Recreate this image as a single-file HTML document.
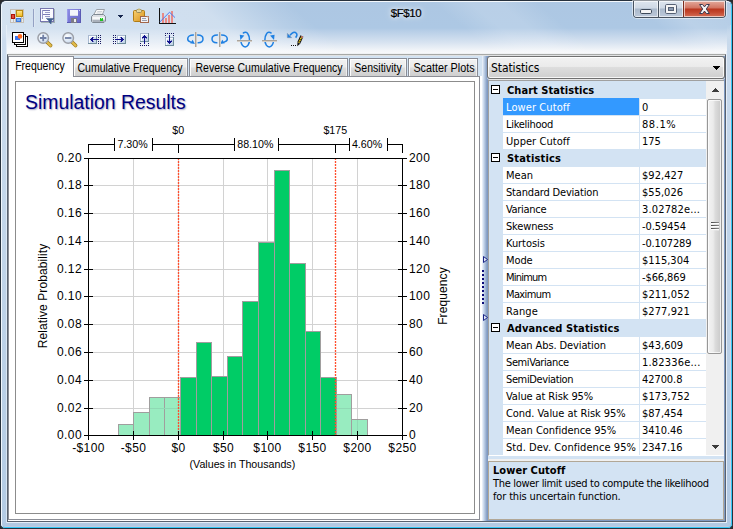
<!DOCTYPE html>
<html lang="en"><head><meta charset="utf-8"><title>$F$10</title>
<style>
html,body{margin:0;padding:0}
body{width:733px;height:529px;overflow:hidden;background:#2b2b2e;position:relative;font-family:"Liberation Sans",sans-serif;font-size:11px;color:#000}
div,span,i,b,u{box-sizing:border-box}
#win{position:absolute;left:0;top:0;width:733px;height:529px;border-radius:6px 6px 5px 5px;background:#b7cfe8;border:1px solid #27313d;overflow:hidden}
#win .hl{position:absolute;left:0;top:0;width:731px;height:527px;border-radius:5px 5px 4px 4px;border:1px solid;border-color:#f4f8fc #35c9f7 #35c9f7 #f0f6fc}
#glass{position:absolute;left:1px;top:1px;width:729px;height:54px;background:linear-gradient(40deg,rgba(255,255,255,.48) 0,rgba(255,255,255,.42) 165px,rgba(255,255,255,.12) 205px,rgba(255,255,255,0) 225px,rgba(255,255,255,0) 318px,rgba(255,255,255,.15) 342px,rgba(255,255,255,.15) 360px,rgba(255,255,255,0) 385px,rgba(255,255,255,0) 445px,rgba(255,255,255,.17) 468px,rgba(255,255,255,.08) 510px),linear-gradient(to bottom,#adc7e3 0,#adc8e4 26px,#b7cee7 29px,#d6e2f0 40px,#f4f6f9 49px,#f8f9f9 54px)}
#sideL{position:absolute;left:1px;top:24px;width:5px;height:502px;background:linear-gradient(to right,rgba(255,255,255,0) 0,rgba(255,255,255,0) 4px,rgba(240,246,253,.6) 4px),linear-gradient(to bottom,rgba(204,220,238,0) 0,#ccdcee 14px,#c6d8eb 25%,#b3cbe4 100%)}
#sideR{position:absolute;left:726px;top:24px;width:4px;height:502px;background:linear-gradient(to right,rgba(255,255,255,0) 0,rgba(255,255,255,0) 3px,rgba(225,215,230,.5) 3px),linear-gradient(to bottom,rgba(201,218,236,0) 0,#c9daec 14px,#c3d6ea 25%,#b0c8e2 100%)}
#sideB{position:absolute;left:1px;top:522px;width:729px;height:4px;background:linear-gradient(to bottom,#b2cae3 0,#b2cae3 3px,#c3cbe0 3px)}
#inner{position:absolute;left:7px;top:54px;width:719px;height:468px;border:1px solid #58626f;border-top-color:#a7a9a7;background:#fff}
#inner:before{content:"";position:absolute;left:0;top:0;width:717px;height:1px;background:#e1e2e3}
#innerhl{position:absolute;left:8px;top:52px;width:717px;height:2px;background:linear-gradient(to bottom,rgba(255,255,255,.5),rgba(235,237,240,.9))}
#brhl{position:absolute;left:7px;top:522px;width:720px;height:1px;background:#e4edf8}
#brhl2{position:absolute;left:726px;top:51px;width:1px;height:472px;background:#e6eef9}
#title{position:absolute;left:386px;top:5px;width:40px;height:16px;line-height:16px;text-align:center;font-size:11.5px;letter-spacing:-.45px;color:#000;-webkit-text-stroke:.2px #000;text-shadow:0 0 4px rgba(255,255,255,.9),0 0 9px rgba(255,255,255,.7)}
/* caption buttons */
#cap{position:absolute;left:633px;top:1px;width:93px;height:17px;border:1px solid #47525f;border-top:none;border-radius:0 0 4px 4px;overflow:hidden;box-shadow:0 0 0 1px rgba(255,255,255,.5)}
#cap div{position:absolute;top:0;height:16px;box-shadow:inset 0 0 0 1px rgba(255,255,255,.62)}
#cmin{left:0;width:24px;background:linear-gradient(to bottom,#dde5ee 0,#cfd9e5 7px,#aab9cb 8px,#bdc9da 16px)}
#cmax{left:25px;width:24px;background:linear-gradient(to bottom,#dde5ee 0,#cfd9e5 7px,#aab9cb 8px,#bdc9da 16px)}
#ccls{left:50px;width:41px;background:linear-gradient(to bottom,#e3ab9d 0,#d27461 7px,#b9371f 8px,#c2452c 11px,#d46e56 16px)}
#cap s{position:absolute;top:0;width:1px;height:16px;background:#47525f}
#cap svg{position:absolute;left:0;top:0}
/* toolbar */
.ic{position:absolute;width:16px;height:16px;overflow:visible}
/* tabs */
#tabs{position:absolute;left:0;top:0;font-size:11px}
#clientbg{position:absolute;left:8px;top:56px;width:474px;height:21px;background:#d3e3f3}
.tab{position:absolute;top:58px;height:19px;border:1px solid #898c95;background:linear-gradient(to bottom,#f2f2f2 0,#ebebeb 48%,#dddddd 52%,#cfcfcf 100%);box-shadow:inset 1px 1px 0 rgba(255,255,255,.9),inset -1px 0 0 rgba(255,255,255,.6);color:#000}
.tab span{position:absolute;left:50%;top:0;line-height:18px;font-size:12px;white-space:nowrap;transform:translateX(-50%) scaleX(.875)}
.tab.sel{top:56px;height:21px;background:#fff;z-index:3;border-bottom:none;box-shadow:none}
.tab.sel span{margin-left:-1px}
.tab.t2 span{margin-left:-1px}
.tab.t5 span{margin-left:1px;transform:translateX(-50%) scaleX(.9)}
#tabpage{position:absolute;left:8px;top:76px;width:472px;height:444px;border:1px solid #8c8e96;background:#fff}
#chartbox{position:absolute;left:6px;top:4px;width:460px;height:433px;border:1px solid #8c8c8c;background:#fff}
#chart{position:absolute;left:-1px;top:-1px}
#labels{position:absolute;left:-16px;top:-82px;width:0;height:0}
.ctitle{position:absolute;left:25px;top:91px;font-size:19.4px;line-height:22px;color:#000080;white-space:nowrap;text-shadow:1px 1px 1.5px rgba(0,0,80,.35)}
.yl,.yr,.xl{position:absolute;font-size:12px;line-height:14px;white-space:nowrap;letter-spacing:.4px}
.yl{left:37px;width:45px;text-align:right}
.yr{left:409px;width:45px;text-align:left}
.xl{top:441px;width:80px;text-align:center}
.bl{position:absolute;font-size:10.67px;line-height:13px;text-align:center;white-space:nowrap}
.rot{position:absolute;letter-spacing:.1px;font-size:12px;line-height:14px;height:14px;text-align:center;white-space:nowrap;transform:rotate(-90deg);transform-origin:50% 50%}
/* splitter */
#split{position:absolute;left:480px;top:56px;width:7px;height:465px;background:linear-gradient(to right,#fff 0,#fff 2px,#e6eef8 2.5px,#c3d3e8 4px,#a3b8d6 5.5px,#839cc3 7px)}
#splittop{position:absolute;left:480px;top:56px;width:2px;height:20px;background:#d3e3f3}
/* right panel */
#rbg{position:absolute;left:487px;top:56px;width:238px;height:465px;background:#7f9ac2}
#combo{position:absolute;left:487px;top:56px;width:238px;height:23px;border:1px solid #707070;border-radius:3px;background:linear-gradient(to bottom,#f2f2f2 0,#ebebeb 45%,#dddddd 50%,#cfcfcf 100%);box-shadow:inset 0 0 0 1px rgba(255,255,255,.8),0 1px 0 #e9e9e9;font-family:"DejaVu Sans Condensed","DejaVu Sans","Liberation Sans",sans-serif;font-size:12px;line-height:19px}
#combo span{position:absolute;left:3px;top:2px;letter-spacing:-.1px}
#combo i{position:absolute;left:225px;top:9px;width:7px;height:4px;background:linear-gradient(#000,#000) 0 0/7px 1px no-repeat,linear-gradient(#000,#000) 1px 1px/5px 1px no-repeat,linear-gradient(#000,#000) 2px 2px/3px 1px no-repeat,linear-gradient(#000,#000) 3px 3px/1px 1px no-repeat}
#grid{position:absolute;left:488px;top:80px;width:236px;height:376px;border-left:1px solid #a0a0a0;border-top:1px solid #a0a0a0;border-bottom:1px solid #fff;background:#d3e3f3;font-family:"DejaVu Sans Condensed","DejaVu Sans","Liberation Sans",sans-serif;font-size:11px;overflow:hidden}
.cat{position:absolute;left:-1px;width:218px;height:17px;line-height:16px;padding-top:1px}
.cat span{position:absolute;left:19px;top:1px;font-weight:bold;white-space:nowrap}
.pm{position:absolute;left:3px;top:3px;width:9px;height:9px;border:1px solid #000;background:#fff}
.pm:after{content:"";position:absolute;left:1px;top:3px;width:5px;height:1px;background:#000}
.row{position:absolute;left:14px;width:203px;height:16px;line-height:16px;background:#fff;white-space:nowrap}
.row .k{position:absolute;left:0;top:0;width:136px;height:16px;padding-left:3px;padding-top:1px;overflow:hidden}
.row .v{position:absolute;left:137px;top:0;width:66px;height:16px;padding-left:2px;padding-top:1px;overflow:hidden;background:#fff}
.row:before{content:"";position:absolute;left:136px;top:0;width:1px;height:16px;background:#d3e3f3}
.row.sel .k{background:#3399ff;color:#fff;top:-1px;height:17px;padding-top:2px}
#sb{position:absolute;left:217px;top:-1px;width:18px;height:375px;background:#f0f0f0}
#sb .up{position:absolute;left:6px;top:8px;width:7px;height:5px;background:linear-gradient(#3c3c3c,#3c3c3c) 3px 0/1px 1px no-repeat,linear-gradient(#3c3c3c,#3c3c3c) 2px 1px/3px 1px no-repeat,linear-gradient(#3c3c3c,#3c3c3c) 1px 2px/5px 1px no-repeat,linear-gradient(#3c3c3c,#3c3c3c) 0 3px/7px 1px no-repeat}
#sb .dn{position:absolute;left:6px;top:365px;width:7px;height:4px;background:linear-gradient(#3c3c3c,#3c3c3c) 0 0/7px 1px no-repeat,linear-gradient(#3c3c3c,#3c3c3c) 1px 1px/5px 1px no-repeat,linear-gradient(#3c3c3c,#3c3c3c) 2px 2px/3px 1px no-repeat,linear-gradient(#3c3c3c,#3c3c3c) 3px 3px/1px 1px no-repeat}
#sb .thumb{position:absolute;left:1px;top:19px;width:15px;height:255px;border:1px solid #979797;border-radius:2px;background:linear-gradient(to right,#f3f3f3 0,#ebebeb 40%,#dcdcdc 55%,#c9c9c9 100%);box-shadow:inset 0 0 0 1px rgba(255,255,255,.7)}
#sb .thumb u{position:absolute;left:3px;top:122px;width:8px;height:9px;background:linear-gradient(to right,rgba(255,255,255,0),rgba(255,255,255,.35)),linear-gradient(to bottom,#4a4a4a 0,#4a4a4a 1px,#fbfbfb 1px,#fbfbfb 2px,transparent 2px,transparent 3px,#4a4a4a 3px,#4a4a4a 4px,#fbfbfb 4px,#fbfbfb 5px,transparent 5px,transparent 6px,#4a4a4a 6px,#4a4a4a 7px,#fbfbfb 7px,#fbfbfb 8px,transparent 8px)}
#desc{position:absolute;left:488px;top:461px;width:236px;height:59px;background:#d3e3f3;border:1px solid #b1a796;font-family:"DejaVu Sans Condensed","DejaVu Sans","Liberation Sans",sans-serif;font-size:11px;line-height:13px;padding:2px 0 0 4px;white-space:nowrap}
#descgap{position:absolute;left:488px;top:456px;width:236px;height:5px;background:linear-gradient(to bottom,#d3e3f3 0,#d3e3f3 3px,#f1f1f1 3px)}

</style></head>
<body>
<div id="win">
<div id="glass"></div><div id="sideL"></div><div id="sideR"></div><div id="sideB"></div>
<div class="hl"></div>
</div>
<div id="innerhl"></div>
<div id="inner"></div><div id="brhl"></div><div id="brhl2"></div>
<div id="clientbg"></div>
<div id="rbg"></div><div id="descgap"></div>
<div id="title">$F$10</div>
<div id="cap">
<div id="cmin"><svg width="24" height="16"><rect x="6.5" y="8.5" width="11" height="4" rx="1.2" fill="#f5f5f5" stroke="#3d4959"/></svg></div><s style="left:24px"></s>
<div id="cmax"><svg width="24" height="16"><rect x="6.5" y="3.5" width="11" height="9" rx="1.2" fill="#f6f6f6" stroke="#566174"/><rect x="9.5" y="6.5" width="5" height="3" fill="#8b9bb1" stroke="#566174"/></svg></div><s style="left:49px;background:#7a2d1e"></s>
<div id="ccls"><svg width="41" height="16"><path d="M15.6 3.5 L18.6 3.5 L20.5 5.9 L22.4 3.5 L25.4 3.5 L22.3 8 L25.4 12.5 L22.4 12.5 L20.5 10.1 L18.6 12.5 L15.6 12.5 L18.7 8 Z" fill="#f6f6f6" stroke="#3c3c52" stroke-width="1" stroke-linejoin="round"/></svg></div>
</div>
<svg id="tb" width="320" height="54" viewBox="0 0 320 54" style="position:absolute;left:0;top:0">
<defs>
<linearGradient id="gY" x1="0" y1="0" x2="0" y2="1"><stop offset="0" stop-color="#ffe98f"/><stop offset="1" stop-color="#f2b51a"/></linearGradient>
<linearGradient id="gF" x1="0" y1="0" x2="1" y2="1"><stop offset="0" stop-color="#8f8fe6"/><stop offset="1" stop-color="#6464c4"/></linearGradient>
<linearGradient id="gC" x1="0" y1="0" x2="1" y2="1"><stop offset="0" stop-color="#f8d070"/><stop offset="1" stop-color="#d8921c"/></linearGradient>
<radialGradient id="gL" cx=".4" cy=".35" r=".7"><stop offset="0" stop-color="#ffffff"/><stop offset="1" stop-color="#c6d8ee"/></radialGradient>
<linearGradient id="gB" x1="0" y1="0" x2="1" y2="1"><stop offset="0" stop-color="#eef4fb"/><stop offset="1" stop-color="#b9cde4"/></linearGradient>
</defs>
<!-- icon 1 : layout -->
<g shape-rendering="crispEdges">
<rect x="10.5" y="9.5" width="13" height="13" fill="#eef3f8" fill-opacity=".55" stroke="#c7c0b6"/>
<rect x="15" y="10" width="1" height="12" fill="#c7c0b6"/><rect x="11" y="18" width="12" height="1" fill="#c7c0b6"/><rect x="13" y="19" width="1" height="3" fill="#c7c0b6"/><rect x="21" y="17" width="1" height="5" fill="#c7c0b6"/>
<rect x="16.5" y="10.5" width="6" height="6" fill="url(#gY)" stroke="#b98a10"/>
<rect x="11.5" y="14.5" width="3" height="4" fill="#e0493a" stroke="#b01208"/>
<rect x="16.5" y="18.5" width="4" height="3" fill="#79adf2" stroke="#3b78dc"/>
<!-- separator -->
<rect x="33" y="9" width="1" height="18" fill="#94a1c3"/><rect x="34" y="9" width="1" height="18" fill="#dde7f3"/>
</g>
<!-- icon 2 : report/filter -->
<g shape-rendering="crispEdges">
<rect x="41" y="9" width="14" height="14" fill="#7f8f88" opacity=".55"/>
<rect x="40.5" y="8.5" width="13" height="13" fill="#fbfbff" stroke="#7676ae"/>
<rect x="42" y="10" width="8" height="1" fill="#7d7db6"/><rect x="45" y="12" width="5" height="1" fill="#9c9cca"/><rect x="42" y="14" width="8" height="1" fill="#7d7db6"/><rect x="45" y="16" width="5" height="1" fill="#9c9cca"/><rect x="42" y="10" width="1" height="9" fill="#9a9ac8"/>
</g>
<path d="M46.3 18.4 L53.7 18.4 L51.1 21.2 L51.1 23.9 L49.4 22.5 L49.4 21.2 Z" fill="#3f6192" stroke="#34507e" stroke-width=".5"/>
<!-- floppy -->
<g shape-rendering="crispEdges">
<rect x="67" y="9" width="14" height="14" fill="url(#gF)"/>
<rect x="67" y="9" width="1" height="14" fill="#9a9aea"/><rect x="80" y="9" width="1" height="14" fill="#5a5ab4"/><rect x="67" y="22" width="14" height="1" fill="#5a5ab4"/>
<rect x="70" y="10" width="8" height="6" fill="#f4f6fb"/><rect x="70" y="15" width="8" height="1" fill="#d8dcea"/>
<rect x="71" y="18" width="6" height="5" fill="#7c7c86"/><rect x="74" y="19" width="2" height="3" fill="#f0f0f0"/>
<rect x="79" y="10" width="1" height="1" fill="#d0d0f8"/>
</g>
<!-- printer -->
<g>
<path d="M96.5 9.5 L104.5 9.5 L102.2 15 L93.6 15 Z" fill="#fbfbfb" stroke="#9aa0a8" stroke-width="1"/>
<path d="M97.3 11.5 L102.3 11.5 M96.6 13 L101.6 13" stroke="#c4c8cf" stroke-width=".8"/>
<path d="M93.5 14.5 L103.5 14.5 L105.5 16.5 L105.5 21 L104 22.5 L92.5 22.5 L91.5 21.5 L91.5 16.5 Z" fill="#dcdfe4" stroke="#7f8892" stroke-width="1"/>
<rect x="92.5" y="17" width="12" height="2" fill="#f6f7f9"/>
<rect x="92.5" y="20" width="12" height="2" fill="#aab1bb"/>
<rect x="100" y="18" width="3" height="3" fill="#1fc423" shape-rendering="crispEdges"/><rect x="101" y="18" width="1" height="1" fill="#9cf49c" shape-rendering="crispEdges"/>
</g>
<!-- dropdown arrow -->
<g shape-rendering="crispEdges" fill="#14244c"><rect x="118" y="15" width="5" height="1"/><rect x="119" y="16" width="3" height="1"/><rect x="120" y="17" width="1" height="1"/></g>
<!-- clipboard -->
<g>
<rect x="133.5" y="10.5" width="11" height="11" rx="1" fill="url(#gC)" stroke="#b07c14"/>
<rect x="136.5" y="9.5" width="5" height="3" rx="1" fill="#e8d9a0" stroke="#9a8a58"/>
<rect x="138" y="8.6" width="2" height="1.6" fill="#c9b870"/>
<rect x="140.5" y="16.5" width="8" height="6" fill="#f3f3f6" stroke="#a2664a"/>
<path d="M142 18.5 H146 M142 20.5 H147" stroke="#9aa0b0" stroke-width="1"/>
<path d="M146.5 16.5 L148.5 18.5 L148.5 16.5 Z" fill="#d9c0b0"/>
</g>
<!-- chart icon -->
<g shape-rendering="crispEdges">
<rect x="162" y="13" width="2" height="10" fill="#e98a86"/><rect x="165" y="18" width="2" height="5" fill="#e98a86"/><rect x="168" y="15" width="2" height="8" fill="#e98a86"/><rect x="171" y="11" width="2" height="12" fill="#e98a86"/>
<rect x="159" y="8" width="1" height="16" fill="#111"/><rect x="159" y="23" width="17" height="1" fill="#111"/>
</g>
<path d="M159.8 22 L169.5 12.2 L175 17.6" fill="none" stroke="#4674f4" stroke-width=".95"/>
<!-- row 2 : pages -->
<g shape-rendering="crispEdges">
<rect x="16.5" y="36.5" width="11" height="10" fill="#fff" stroke="#000"/>
<rect x="14.5" y="34.5" width="11" height="10" fill="#fff" stroke="#000"/>
<rect x="12.5" y="32.5" width="11" height="10" fill="#fff" stroke="#000"/>
<rect x="15" y="36" width="5" height="4" fill="#3a74f0"/>
</g>
<circle cx="20" cy="36.4" r="2.3" fill="#ff6a1f"/>
<!-- zoom in -->
<g>
<path d="M47 42 L50.6 45.6" stroke="#9c7a1c" stroke-width="3.6" stroke-linecap="round"/>
<path d="M47 42 L50.6 45.6" stroke="#e2bb4a" stroke-width="2.2" stroke-linecap="round"/>
<circle cx="43.2" cy="38" r="5.3" fill="url(#gL)" stroke="#9b9ea6" stroke-width="1.4"/>
<path d="M40 38 H46.4 M43.2 34.8 V41.2" stroke="#6f7ea4" stroke-width="1.8"/>
</g>
<!-- zoom out -->
<g>
<path d="M72 42 L75.6 45.6" stroke="#9c7a1c" stroke-width="3.6" stroke-linecap="round"/>
<path d="M72 42 L75.6 45.6" stroke="#e2bb4a" stroke-width="2.2" stroke-linecap="round"/>
<circle cx="68.2" cy="38" r="5.3" fill="url(#gL)" stroke="#9b9ea6" stroke-width="1.4"/>
<path d="M65 38 H71.4" stroke="#6f7ea4" stroke-width="1.8"/>
</g>
<!-- arrows -->
<g shape-rendering="crispEdges">
<rect x="88" y="35" width="9" height="9" fill="url(#gB)"/><rect x="88" y="35" width="9" height="1" fill="#a9b9d1"/><rect x="88" y="35" width="1" height="9" fill="#a9b9d1"/><rect x="88" y="43" width="9" height="1" fill="#6f8d9b"/><rect x="96" y="35" width="1" height="9" fill="#6f8d9b"/><rect x="89" y="36" width="7" height="1" fill="#fff" opacity=".8"/><rect x="89" y="36" width="1" height="7" fill="#fff" opacity=".8"/>
<rect x="98" y="35" width="1" height="1" fill="#15155e"/><rect x="98" y="37" width="1" height="1" fill="#15155e"/><rect x="98" y="39" width="1" height="1" fill="#15155e"/><rect x="98" y="41" width="1" height="1" fill="#15155e"/><rect x="98" y="43" width="1" height="1" fill="#15155e"/><rect x="100" y="35" width="1" height="1" fill="#15155e"/><rect x="100" y="37" width="1" height="1" fill="#15155e"/><rect x="100" y="39" width="1" height="1" fill="#15155e"/><rect x="100" y="41" width="1" height="1" fill="#15155e"/><rect x="100" y="43" width="1" height="1" fill="#15155e"/>
<rect x="91" y="39" width="8" height="1" fill="#11118c"/>
<rect x="90" y="39" width="1" height="1" fill="#11118c"/><rect x="91" y="38" width="1" height="3" fill="#11118c"/><rect x="92" y="37" width="1" height="5" fill="#11118c"/><rect x="93" y="37" width="1" height="1" fill="#11118c" opacity=".5"/><rect x="93" y="41" width="1" height="1" fill="#11118c" opacity=".5"/>
<rect x="117" y="35" width="9" height="9" fill="url(#gB)"/><rect x="117" y="35" width="9" height="1" fill="#a9b9d1"/><rect x="117" y="35" width="1" height="9" fill="#a9b9d1"/><rect x="117" y="43" width="9" height="1" fill="#6f8d9b"/><rect x="125" y="35" width="1" height="9" fill="#6f8d9b"/><rect x="118" y="36" width="7" height="1" fill="#fff" opacity=".8"/><rect x="118" y="36" width="1" height="7" fill="#fff" opacity=".8"/>
<rect x="113" y="35" width="1" height="1" fill="#15155e"/><rect x="113" y="37" width="1" height="1" fill="#15155e"/><rect x="113" y="39" width="1" height="1" fill="#15155e"/><rect x="113" y="41" width="1" height="1" fill="#15155e"/><rect x="113" y="43" width="1" height="1" fill="#15155e"/><rect x="115" y="35" width="1" height="1" fill="#15155e"/><rect x="115" y="37" width="1" height="1" fill="#15155e"/><rect x="115" y="39" width="1" height="1" fill="#15155e"/><rect x="115" y="41" width="1" height="1" fill="#15155e"/><rect x="115" y="43" width="1" height="1" fill="#15155e"/>
<rect x="115" y="39" width="8" height="1" fill="#11118c"/>
<rect x="123" y="39" width="1" height="1" fill="#11118c"/><rect x="122" y="38" width="1" height="3" fill="#11118c"/><rect x="121" y="37" width="1" height="5" fill="#11118c"/><rect x="120" y="37" width="1" height="1" fill="#11118c" opacity=".5"/><rect x="120" y="41" width="1" height="1" fill="#11118c" opacity=".5"/>
<rect x="140" y="33" width="9" height="9" fill="url(#gB)"/><rect x="140" y="33" width="9" height="1" fill="#a9b9d1"/><rect x="140" y="33" width="1" height="9" fill="#a9b9d1"/><rect x="140" y="41" width="9" height="1" fill="#6f8d9b"/><rect x="148" y="33" width="1" height="9" fill="#6f8d9b"/><rect x="141" y="34" width="7" height="1" fill="#fff" opacity=".8"/><rect x="141" y="34" width="1" height="7" fill="#fff" opacity=".8"/>
<rect x="140" y="43" width="1" height="1" fill="#15155e"/><rect x="148" y="43" width="1" height="1" fill="#15155e"/><rect x="140" y="45" width="1" height="1" fill="#15155e"/><rect x="142" y="45" width="1" height="1" fill="#15155e"/><rect x="144" y="45" width="1" height="1" fill="#15155e"/><rect x="146" y="45" width="1" height="1" fill="#15155e"/><rect x="148" y="45" width="1" height="1" fill="#15155e"/>
<rect x="144" y="36" width="1" height="8" fill="#11118c"/>
<rect x="144" y="35" width="1" height="1" fill="#11118c"/><rect x="143" y="36" width="3" height="1" fill="#11118c"/><rect x="142" y="37" width="5" height="1" fill="#11118c"/><rect x="142" y="38" width="1" height="1" fill="#11118c" opacity=".5"/><rect x="146" y="38" width="1" height="1" fill="#11118c" opacity=".5"/>
<rect x="165" y="37" width="9" height="9" fill="url(#gB)"/><rect x="165" y="37" width="9" height="1" fill="#a9b9d1"/><rect x="165" y="37" width="1" height="9" fill="#a9b9d1"/><rect x="165" y="45" width="9" height="1" fill="#6f8d9b"/><rect x="173" y="37" width="1" height="9" fill="#6f8d9b"/><rect x="166" y="38" width="7" height="1" fill="#fff" opacity=".8"/><rect x="166" y="38" width="1" height="7" fill="#fff" opacity=".8"/>
<rect x="165" y="33" width="1" height="1" fill="#15155e"/><rect x="167" y="33" width="1" height="1" fill="#15155e"/><rect x="169" y="33" width="1" height="1" fill="#15155e"/><rect x="171" y="33" width="1" height="1" fill="#15155e"/><rect x="173" y="33" width="1" height="1" fill="#15155e"/><rect x="165" y="35" width="1" height="1" fill="#15155e"/><rect x="173" y="35" width="1" height="1" fill="#15155e"/>
<rect x="169" y="35" width="1" height="8" fill="#11118c"/>
<rect x="169" y="43" width="1" height="1" fill="#11118c"/><rect x="168" y="42" width="3" height="1" fill="#11118c"/><rect x="167" y="41" width="5" height="1" fill="#11118c"/><rect x="167" y="40" width="1" height="1" fill="#11118c" opacity=".5"/><rect x="171" y="40" width="1" height="1" fill="#11118c" opacity=".5"/>
</g>
<!-- rotate icons -->
<g fill="none" stroke="#1f80e2" stroke-width="1.5" stroke-linecap="round">
<path d="M197.6 35 C201 35 203 36.8 203 38.9 C203 41 201 42.5 198.2 42.8"/>
<path d="M193.4 35 C190 35 187.7 36.8 187.7 38.9 C187.7 40.3 188.6 41.3 190.4 41.9"/>
<path d="M194.9 43.9 L190.1 43.3 L192.7 39.7 Z" fill="#1f80e2" stroke="none"/>
</g>
<g fill="none" stroke="#1f80e2" stroke-width="1.5" stroke-linecap="round" transform="translate(415,0) scale(-1,1)">
<path d="M197.6 35 C201 35 203 36.8 203 38.9 C203 41 201 42.5 198.2 42.8"/>
<path d="M193.4 35 C190 35 187.7 36.8 187.7 38.9 C187.7 40.3 188.6 41.3 190.4 41.9"/>
<path d="M194.9 43.9 L190.1 43.3 L192.7 39.7 Z" fill="#1f80e2" stroke="none"/>
</g>
<g shape-rendering="crispEdges">
<rect x="195" y="32" width="1" height="15" fill="#aaa39b"/><rect x="196" y="32" width="1" height="15" fill="#d3cdc6"/>
<rect x="219" y="32" width="1" height="15" fill="#aaa39b"/><rect x="220" y="32" width="1" height="15" fill="#d3cdc6"/>
</g>
<g fill="none" stroke="#1f80e2" stroke-width="1.5" stroke-linecap="round">
<path d="M243.4 32.9 C244.8 31.7 246.6 31.9 247.8 33.7 C249.9 36.7 250.1 42.2 248.1 45.2 C246.6 47.5 243.7 47.5 242.3 45.2 C241.7 44.2 241.3 43.3 241.1 42.4"/>
<path d="M239.8 34.7 L244.3 35.5 L240.4 40.1 Z" fill="#1f80e2" stroke="none"/>
</g>
<g fill="none" stroke="#1f80e2" stroke-width="1.5" stroke-linecap="round" transform="translate(514.4,0) scale(-1,1)">
<path d="M243.4 32.9 C244.8 31.7 246.6 31.9 247.8 33.7 C249.9 36.7 250.1 42.2 248.1 45.2 C246.6 47.5 243.7 47.5 242.3 45.2 C241.7 44.2 241.3 43.3 241.1 42.4"/>
<path d="M239.8 34.7 L244.3 35.5 L240.4 40.1 Z" fill="#1f80e2" stroke="none"/>
</g>
<g shape-rendering="crispEdges">
<rect x="237" y="40" width="15" height="1" fill="#aaa39b"/><rect x="237" y="41" width="15" height="1" fill="#d3cdc6"/>
<rect x="262" y="40" width="15" height="1" fill="#aaa39b"/><rect x="262" y="41" width="15" height="1" fill="#d3cdc6"/>
</g>
<!-- undo + pencil -->
<g>
<path d="M290 35.4 C292 32.4 294.6 31.5 296.1 33 C297.5 34.3 297 36.1 295.6 37.6" fill="none" stroke="#1f80e2" stroke-width="1.6"/>
<path d="M287.3 33.2 L287.3 37.7 L291.8 37.7 Z" fill="#1f80e2" stroke="#8a98ac" stroke-width=".5"/>
<path d="M298.7 43 L301.9 36" stroke="#111" stroke-width="3.2" stroke-linecap="butt"/>
<path d="M297.2 46.3 L297.5 42.4 L300.2 43.7 Z" fill="#111"/>
<path d="M298.8 42.8 L301.6 36.8" stroke="#f6d21c" stroke-width="1.4" stroke-dasharray="1.4 .6"/>
<path d="M301.3 36.6 L302.9 37.3" stroke="#ef8d8d" stroke-width="1.3"/>
<g shape-rendering="crispEdges" fill="#111"><rect x="291" y="45" width="1" height="1"/><rect x="293" y="45" width="1" height="1"/><rect x="295" y="45" width="1" height="1"/></g>
</g>
</svg>
<div id="tabs">
<div class="tab sel" style="left:8px;width:66px"><span>Frequency</span></div>
<div class="tab t2" style="left:73px;width:115px"><span>Cumulative Frequency</span></div>
<div class="tab t3" style="left:189px;width:159px"><span>Reverse Cumulative Frequency</span></div>
<div class="tab t4" style="left:349px;width:58px"><span>Sensitivity</span></div>
<div class="tab t5" style="left:408px;width:70px"><span>Scatter Plots</span></div>
</div>
<div id="tabpage"><div id="chartbox">
<svg id="chart" width="460" height="433" viewBox="15 81 460 433" shape-rendering="crispEdges">
<rect x="133" y="159" width="1" height="276" fill="#d2d2d2"/>
<rect x="178" y="159" width="1" height="276" fill="#d2d2d2"/>
<rect x="223" y="159" width="1" height="276" fill="#d2d2d2"/>
<rect x="267" y="159" width="1" height="276" fill="#d2d2d2"/>
<rect x="312" y="159" width="1" height="276" fill="#d2d2d2"/>
<rect x="357" y="159" width="1" height="276" fill="#d2d2d2"/>
<rect x="89" y="408" width="313" height="1" fill="#d2d2d2"/>
<rect x="89" y="380" width="313" height="1" fill="#d2d2d2"/>
<rect x="89" y="352" width="313" height="1" fill="#d2d2d2"/>
<rect x="89" y="324" width="313" height="1" fill="#d2d2d2"/>
<rect x="89" y="296" width="313" height="1" fill="#d2d2d2"/>
<rect x="89" y="269" width="313" height="1" fill="#d2d2d2"/>
<rect x="89" y="241" width="313" height="1" fill="#d2d2d2"/>
<rect x="89" y="213" width="313" height="1" fill="#d2d2d2"/>
<rect x="89" y="185" width="313" height="1" fill="#d2d2d2"/>
<rect x="118" y="424" width="16" height="11" fill="#a09e9e"/><rect x="119" y="425" width="14" height="10" fill="#98ecc0"/>
<rect x="133" y="412" width="17" height="23" fill="#a09e9e"/><rect x="134" y="413" width="15" height="22" fill="#98ecc0"/>
<rect x="149" y="397" width="16" height="38" fill="#a09e9e"/><rect x="150" y="398" width="14" height="37" fill="#98ecc0"/>
<rect x="164" y="397" width="17" height="38" fill="#a09e9e"/><rect x="165" y="398" width="15" height="37" fill="#98ecc0"/>
<rect x="180" y="377" width="17" height="58" fill="#a09e9e"/><rect x="181" y="378" width="15" height="57" fill="#00cc66"/>
<rect x="196" y="342" width="16" height="93" fill="#a09e9e"/><rect x="197" y="343" width="14" height="92" fill="#00cc66"/>
<rect x="211" y="376" width="17" height="59" fill="#a09e9e"/><rect x="212" y="377" width="15" height="58" fill="#00cc66"/>
<rect x="227" y="356" width="16" height="79" fill="#a09e9e"/><rect x="228" y="357" width="14" height="78" fill="#00cc66"/>
<rect x="242" y="301" width="17" height="134" fill="#a09e9e"/><rect x="243" y="302" width="15" height="133" fill="#00cc66"/>
<rect x="258" y="242" width="17" height="193" fill="#a09e9e"/><rect x="259" y="243" width="15" height="192" fill="#00cc66"/>
<rect x="274" y="170" width="16" height="265" fill="#a09e9e"/><rect x="275" y="171" width="14" height="264" fill="#00cc66"/>
<rect x="289" y="263" width="17" height="172" fill="#a09e9e"/><rect x="290" y="264" width="15" height="171" fill="#00cc66"/>
<rect x="305" y="331" width="16" height="104" fill="#a09e9e"/><rect x="306" y="332" width="14" height="103" fill="#00cc66"/>
<rect x="320" y="377" width="17" height="58" fill="#a09e9e"/><rect x="321" y="378" width="15" height="57" fill="#00cc66"/>
<rect x="336" y="394" width="16" height="41" fill="#a09e9e"/><rect x="337" y="395" width="14" height="40" fill="#98ecc0"/>
<rect x="351" y="419" width="17" height="16" fill="#a09e9e"/><rect x="352" y="420" width="15" height="15" fill="#98ecc0"/>
<rect x="150" y="408" width="30" height="1" fill="#8fd9b4"/>
<rect x="337" y="408" width="14" height="1" fill="#8fd9b4"/>
<rect x="178" y="398" width="1" height="37" fill="#8fd9b4"/>
<rect x="357" y="420" width="1" height="15" fill="#8fd9b4"/>
<line x1="178.5" y1="158" x2="178.5" y2="435" stroke="#ff5533" stroke-opacity=".17" stroke-width="3" stroke-dasharray="2 1"/>
<line x1="178.5" y1="158" x2="178.5" y2="435" stroke="#ff4f2e" stroke-width="1" stroke-dasharray="2 1"/>
<line x1="335.5" y1="158" x2="335.5" y2="435" stroke="#ff5533" stroke-opacity=".17" stroke-width="3" stroke-dasharray="2 1"/>
<line x1="335.5" y1="158" x2="335.5" y2="435" stroke="#ff4f2e" stroke-width="1" stroke-dasharray="2 1"/>
<rect x="84" y="158" width="323" height="1" fill="#000"/>
<rect x="84" y="435" width="323" height="1" fill="#000"/>
<rect x="88" y="158" width="1" height="282" fill="#000"/>
<rect x="402" y="158" width="1" height="282" fill="#000"/>
<rect x="84" y="435" width="9" height="1" fill="#000"/>
<rect x="398" y="435" width="9" height="1" fill="#000"/>
<rect x="84" y="408" width="9" height="1" fill="#000"/>
<rect x="398" y="408" width="9" height="1" fill="#000"/>
<rect x="84" y="380" width="9" height="1" fill="#000"/>
<rect x="398" y="380" width="9" height="1" fill="#000"/>
<rect x="84" y="352" width="9" height="1" fill="#000"/>
<rect x="398" y="352" width="9" height="1" fill="#000"/>
<rect x="84" y="324" width="9" height="1" fill="#000"/>
<rect x="398" y="324" width="9" height="1" fill="#000"/>
<rect x="84" y="296" width="9" height="1" fill="#000"/>
<rect x="398" y="296" width="9" height="1" fill="#000"/>
<rect x="84" y="269" width="9" height="1" fill="#000"/>
<rect x="398" y="269" width="9" height="1" fill="#000"/>
<rect x="84" y="241" width="9" height="1" fill="#000"/>
<rect x="398" y="241" width="9" height="1" fill="#000"/>
<rect x="84" y="213" width="9" height="1" fill="#000"/>
<rect x="398" y="213" width="9" height="1" fill="#000"/>
<rect x="84" y="185" width="9" height="1" fill="#000"/>
<rect x="398" y="185" width="9" height="1" fill="#000"/>
<rect x="84" y="158" width="9" height="1" fill="#000"/>
<rect x="398" y="158" width="9" height="1" fill="#000"/>
<rect x="88" y="431" width="1" height="9" fill="#000"/>
<rect x="133" y="431" width="1" height="9" fill="#000"/>
<rect x="178" y="431" width="1" height="9" fill="#000"/>
<rect x="223" y="431" width="1" height="9" fill="#000"/>
<rect x="267" y="431" width="1" height="9" fill="#000"/>
<rect x="312" y="431" width="1" height="9" fill="#000"/>
<rect x="357" y="431" width="1" height="9" fill="#000"/>
<rect x="402" y="431" width="1" height="9" fill="#000"/>
<rect x="88" y="144" width="27" height="1" fill="#000"/>
<rect x="152" y="144" width="83" height="1" fill="#000"/>
<rect x="278" y="144" width="72" height="1" fill="#000"/>
<rect x="387" y="144" width="16" height="1" fill="#000"/>
<rect x="88" y="144" width="1" height="9" fill="#000"/>
<rect x="178" y="144" width="1" height="9" fill="#000"/>
<rect x="335" y="144" width="1" height="9" fill="#000"/>
<rect x="402" y="144" width="1" height="9" fill="#000"/>
<rect x="114" y="138" width="1" height="13" fill="#000"/>
<rect x="152" y="138" width="1" height="13" fill="#000"/>
<rect x="234" y="138" width="1" height="13" fill="#000"/>
<rect x="278" y="138" width="1" height="13" fill="#000"/>
<rect x="349" y="138" width="1" height="13" fill="#000"/>
<rect x="387" y="138" width="1" height="13" fill="#000"/>
</svg>
<div id="labels">
<div class="ctitle">Simulation Results</div>
<div class="yl" style="top:428px">0.00</div>
<div class="yr" style="top:428px">0</div>
<div class="yl" style="top:401px">0.02</div>
<div class="yr" style="top:401px">20</div>
<div class="yl" style="top:373px">0.04</div>
<div class="yr" style="top:373px">40</div>
<div class="yl" style="top:345px">0.06</div>
<div class="yr" style="top:345px">60</div>
<div class="yl" style="top:317px">0.08</div>
<div class="yr" style="top:317px">80</div>
<div class="yl" style="top:289px">0.10</div>
<div class="yr" style="top:289px">100</div>
<div class="yl" style="top:262px">0.12</div>
<div class="yr" style="top:262px">120</div>
<div class="yl" style="top:234px">0.14</div>
<div class="yr" style="top:234px">140</div>
<div class="yl" style="top:206px">0.16</div>
<div class="yr" style="top:206px">160</div>
<div class="yl" style="top:178px">0.18</div>
<div class="yr" style="top:178px">180</div>
<div class="yl" style="top:151px">0.20</div>
<div class="yr" style="top:151px">200</div>
<div class="xl" style="left:48.5px">-$100</div>
<div class="xl" style="left:93.5px">-$50</div>
<div class="xl" style="left:138.5px">$0</div>
<div class="xl" style="left:183.5px">$50</div>
<div class="xl" style="left:227.5px">$100</div>
<div class="xl" style="left:272.5px">$150</div>
<div class="xl" style="left:317.5px">$200</div>
<div class="xl" style="left:362.5px">$250</div>
<div class="bl" style="left:82.6px;top:138px;width:100px">7.30%</div>
<div class="bl" style="left:205.3px;top:138px;width:100px">88.10%</div>
<div class="bl" style="left:317.0px;top:138px;width:100px">4.60%</div>
<div class="bl" style="left:128.3px;top:124px;width:100px">$0</div>
<div class="bl" style="left:285.3px;top:124px;width:100px">$175</div>
<div class="bl" style="left:172.4px;top:458px;width:140px">(Values in Thousands)</div>
<div class="rot" style="left:-27px;top:289px;width:140px">Relative Probability</div>
<div class="rot" style="left:373px;top:289px;width:140px">Frequency</div>
</div>
</div></div>
<div id="split"><svg width="7" height="70" viewBox="0 0 7 70" style="position:absolute;left:2px;top:199px" shape-rendering="crispEdges">
<path d="M1.5 1.5 L5.5 4.5 L1.5 7.5 Z" fill="#dfe6f4" stroke="#1a2486" stroke-width="1" shape-rendering="geometricPrecision"/>
<path d="M1.5 59.5 L5.5 62.5 L1.5 65.5 Z" fill="#dfe6f4" stroke="#1a2486" stroke-width="1" shape-rendering="geometricPrecision"/>
<rect x="0" y="15" width="2" height="2" fill="#0a0a78"/>
<rect x="0" y="19" width="2" height="2" fill="#0a0a78"/>
<rect x="0" y="23" width="2" height="2" fill="#0a0a78"/>
<rect x="0" y="27" width="2" height="2" fill="#0a0a78"/>
<rect x="0" y="31" width="2" height="2" fill="#0a0a78"/>
<rect x="0" y="35" width="2" height="2" fill="#0a0a78"/>
<rect x="0" y="39" width="2" height="2" fill="#0a0a78"/>
<rect x="0" y="43" width="2" height="2" fill="#0a0a78"/>
<rect x="0" y="47" width="2" height="2" fill="#0a0a78"/>
</svg></div><div id="splittop"></div>
<div id="combo"><span>Statistics</span><i></i></div>
<div id="grid">
<div class="cat" style="top:1px"><b class="pm"></b><span style="letter-spacing:0.05px">Chart Statistics</span></div>
<div class="row sel" style="top:18px"><span class="k" style="letter-spacing:0.09px">Lower Cutoff</span><span class="v" style="letter-spacing:0px">0</span></div>
<div class="row" style="top:35px"><span class="k" style="letter-spacing:-0.29px">Likelihood</span><span class="v" style="letter-spacing:0.55px">88.1%</span></div>
<div class="row" style="top:52px"><span class="k" style="letter-spacing:0.05px">Upper Cutoff</span><span class="v" style="letter-spacing:0.0px">175</span></div>
<div class="cat" style="top:69px"><b class="pm"></b><span style="letter-spacing:0.17px">Statistics</span></div>
<div class="row" style="top:86px"><span class="k" style="letter-spacing:0.0px">Mean</span><span class="v" style="letter-spacing:0.05px">$92,427</span></div>
<div class="row" style="top:103px"><span class="k" style="letter-spacing:-0.18px">Standard Deviation</span><span class="v" style="letter-spacing:0.02px">$55,026</span></div>
<div class="row" style="top:120px"><span class="k" style="letter-spacing:-0.31px">Variance</span><span class="v" style="letter-spacing:0.15px">3.02782e...</span></div>
<div class="row" style="top:137px"><span class="k" style="letter-spacing:-0.17px">Skewness</span><span class="v" style="letter-spacing:-0.07px">-0.59454</span></div>
<div class="row" style="top:154px"><span class="k" style="letter-spacing:-0.06px">Kurtosis</span><span class="v" style="letter-spacing:-0.16px">-0.107289</span></div>
<div class="row" style="top:171px"><span class="k" style="letter-spacing:-0.1px">Mode</span><span class="v" style="letter-spacing:0.01px">$115,304</span></div>
<div class="row" style="top:188px"><span class="k" style="letter-spacing:-0.78px">Minimum</span><span class="v" style="letter-spacing:-0.1px">-$66,869</span></div>
<div class="row" style="top:205px"><span class="k" style="letter-spacing:-0.62px">Maximum</span><span class="v" style="letter-spacing:0.09px">$211,052</span></div>
<div class="row" style="top:222px"><span class="k" style="letter-spacing:0.12px">Range</span><span class="v" style="letter-spacing:0.07px">$277,921</span></div>
<div class="cat" style="top:239px"><b class="pm"></b><span style="letter-spacing:0.11px">Advanced Statistics</span></div>
<div class="row" style="top:256px"><span class="k" style="letter-spacing:-0.11px">Mean Abs. Deviation</span><span class="v" style="letter-spacing:0.03px">$43,609</span></div>
<div class="row" style="top:273px"><span class="k" style="letter-spacing:-0.4px">SemiVariance</span><span class="v" style="letter-spacing:0.19px">1.82336e...</span></div>
<div class="row" style="top:290px"><span class="k" style="letter-spacing:-0.38px">SemiDeviation</span><span class="v" style="letter-spacing:-0.08px">42700.8</span></div>
<div class="row" style="top:307px"><span class="k" style="letter-spacing:-0.11px">Value at Risk 95%</span><span class="v" style="letter-spacing:0.09px">$173,752</span></div>
<div class="row" style="top:324px"><span class="k" style="letter-spacing:-0.05px">Cond. Value at Risk 95%</span><span class="v" style="letter-spacing:0.0px">$87,454</span></div>
<div class="row" style="top:341px"><span class="k" style="letter-spacing:-0.04px">Mean Confidence 95%</span><span class="v" style="letter-spacing:-0.07px">3410.46</span></div>
<div class="row" style="top:358px"><span class="k" style="letter-spacing:0.06px">Std. Dev. Confidence 95%</span><span class="v" style="letter-spacing:-0.07px">2347.16</span></div>
<div id="sb"><i class="up"></i><b class="thumb"><u></u></b><i class="dn"></i></div>
</div>
<div id="desc"><b style="letter-spacing:0.05px">Lower Cutoff</b><br><span style="letter-spacing:-0.31px">The lower limit used to compute the likelihood</span><br><span style="letter-spacing:-0.15px">for this uncertain function.</span></div>
</body></html>
